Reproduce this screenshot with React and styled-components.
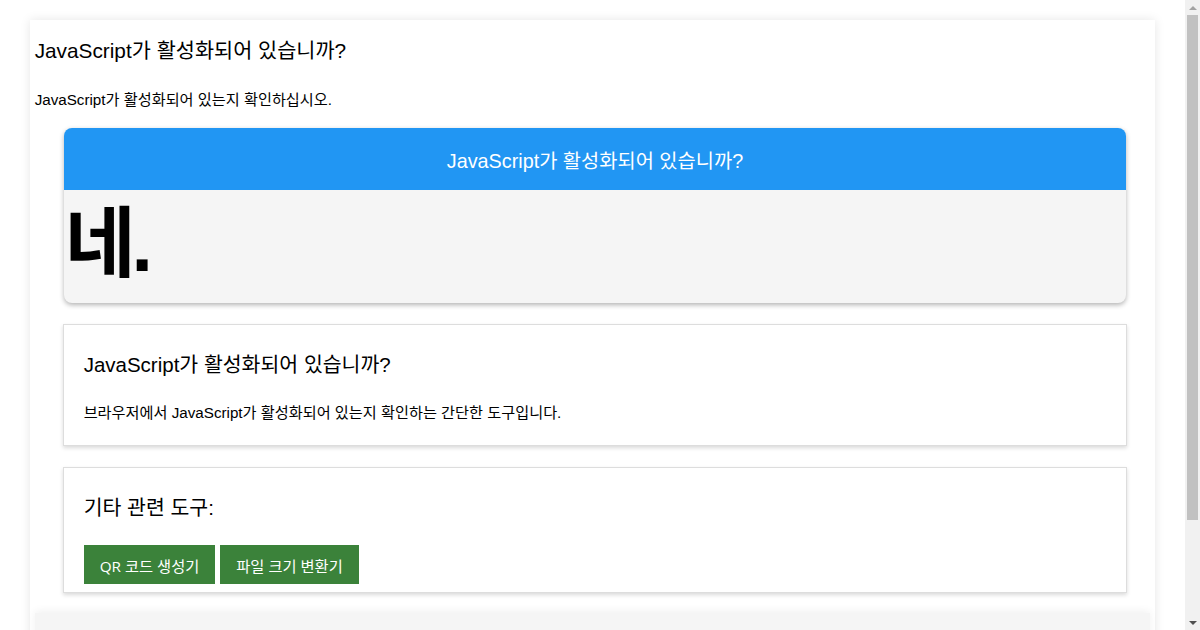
import React from "react";
import styled, { createGlobalStyle } from "styled-components";

const GlobalStyle = createGlobalStyle`
  html, body {
    scrollbar-width: none;
  }
  body {
    margin: 0;
    background: #ffffff;
    color: #000;
    font-family: "Liberation Sans", "Noto Sans CJK KR", sans-serif;
  }
`;

// the page is laid out beside a classic 15px scrollbar
const Viewport = styled.div`
  margin-right: 15px;
  padding: 20px 0;
`;

const Page = styled.div`
  width: 95%;
  margin: 0 auto;
  padding: 5px;
  box-sizing: border-box;
  background: #fff;
  box-shadow: 0 0 10px rgba(0, 0, 0, 0.1);
`;

const Title = styled.h1`
  font-size: 20.8px;
  font-weight: normal;
  line-height: 24px;
  margin: 14px 0 0;
`;

const Lead = styled.p`
  font-size: 15.2px;
  line-height: 17px;
  margin: 28px 0 20px;
`;

const Section = styled.div`
  margin: 0 23px 0 28px;
  display: flex;
  flex-direction: column;
  gap: 21px;
`;

const ResultCard = styled.div`
  margin: 0 1px;
  border-radius: 8px;
  overflow: hidden;
  background: #f5f5f5;
  box-shadow: 0 2px 5px rgba(0, 0, 0, 0.3);
`;

const ResultHeader = styled.div`
  height: 62px;
  display: flex;
  align-items: center;
  justify-content: center;
  background: #2196f3;
  color: #fff;
  font-size: 19.8px;
`;

const Answer = styled.div`
  height: 113px;
  padding-left: 1px;
  font-size: 77px;
  font-weight: bold;
  line-height: 108px;
  letter-spacing: -4px;
`;

const InfoCard = styled.div`
  border: 1px solid #ddd;
  background: #fff;
  box-shadow: 0 2px 4px rgba(0, 0, 0, 0.15);
  padding: 20px 20px ${(p) => p.$bottom}px;
`;

const CardTitle = styled.h2`
  font-size: 20.5px;
  font-weight: normal;
  line-height: 24px;
  margin: 8px 0 0;
`;

const CardText = styled.p`
  font-size: 15.2px;
  line-height: 17px;
  margin: 27px 0 0;
`;

const ToolRow = styled.div`
  display: flex;
  gap: 5px;
  margin-top: 25px;
`;

const ToolButton = styled.a`
  display: flex;
  align-items: center;
  height: 39px;
  padding: 0 16px;
  background: #3b823a;
  color: #fff;
  font-family: "Open Sans", "Noto Sans CJK KR", sans-serif;
  font-size: 15.3px;
  text-decoration: none;
  cursor: pointer;
`;

const Footer = styled.div`
  margin-top: 20px;
  height: 300px;
  background: #f5f5f5;
  box-shadow: 0 -2px 8px rgba(0, 0, 0, 0.06);
`;

const ScrollTrack = styled.div`
  position: fixed;
  top: 0;
  right: 0;
  width: 15px;
  height: 100vh;
  background: #f1f1f1;
  display: flex;
  flex-direction: column;
  align-items: center;
`;

const ScrollArrow = styled.div`
  flex: none;
  height: 15px;
  display: flex;
  align-items: center;
  justify-content: center;
  &::before {
    content: "";
    border-left: 4px solid transparent;
    border-right: 4px solid transparent;
    ${(p) =>
      p.$down
        ? "border-top: 4px solid #505050;"
        : "border-bottom: 4px solid #a3a3a3;"}
  }
`;

const ScrollRail = styled.div`
  flex: 1;
  width: 11px;
`;

const ScrollThumb = styled.div`
  height: 505px;
  background: #c1c1c1;
`;

const tools = ["QR 코드 생성기", "파일 크기 변환기"];

export default function App() {
  return (
    <>
      <GlobalStyle />
      <Viewport>
        <Page>
          <Title>JavaScript가 활성화되어 있습니까?</Title>
          <Lead>JavaScript가 활성화되어 있는지 확인하십시오.</Lead>
          <Section>
            <ResultCard>
              <ResultHeader>JavaScript가 활성화되어 있습니까?</ResultHeader>
              <Answer>네.</Answer>
            </ResultCard>
            <InfoCard $bottom={24}>
              <CardTitle>JavaScript가 활성화되어 있습니까?</CardTitle>
              <CardText>
                브라우저에서 JavaScript가 활성화되어 있는지 확인하는 간단한
                도구입니다.
              </CardText>
            </InfoCard>
            <InfoCard $bottom={8}>
              <CardTitle>기타 관련 도구:</CardTitle>
              <ToolRow>
                {tools.map((t) => (
                  <ToolButton key={t}>{t}</ToolButton>
                ))}
              </ToolRow>
            </InfoCard>
          </Section>
          <Footer />
        </Page>
      </Viewport>
      <ScrollTrack>
        <ScrollArrow />
        <ScrollRail>
          <ScrollThumb />
        </ScrollRail>
        <ScrollArrow $down />
      </ScrollTrack>
    </>
  );
}
